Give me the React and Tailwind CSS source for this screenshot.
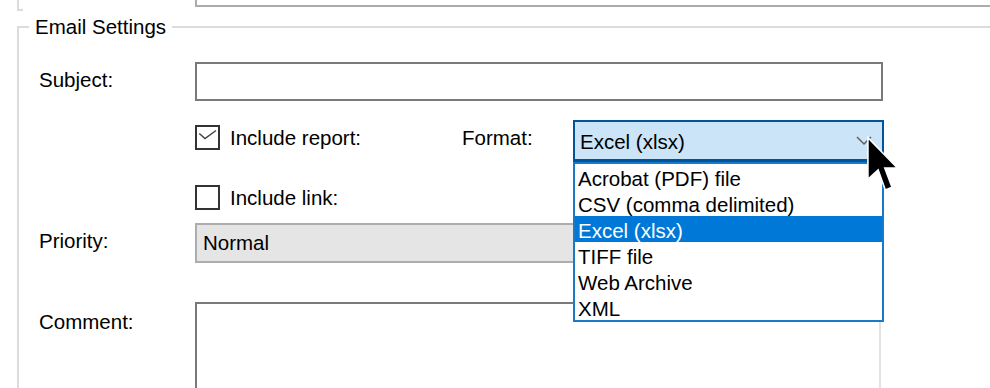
import React from 'react';

const formats = ['Acrobat (PDF) file', 'CSV (comma delimited)', 'Excel (xlsx)', 'TIFF file', 'Web Archive', 'XML'];

const Checkbox = ({ checked }) => (
  <span className="w-[25px] h-[25px] border-2 border-[#333333] bg-white shrink-0 flex">
    {checked && (
      <svg width="21" height="21" viewBox="0 0 21 21">
        <path d="M2.3 6.5 L8 11.5 L19 3.5" fill="none" stroke="#444444" strokeWidth="1.5" />
      </svg>
    )}
  </span>
);

const App = () => {
  return (
    <div className="w-[990px] h-[388px] overflow-hidden bg-white relative font-['Liberation_Sans',Arial,sans-serif] text-[20.5px] leading-[24px] text-black">
      {/* bottom of the group above */}
      <div className="flex h-[26px] items-start">
        <div className="ml-[17px] w-[6px] h-[11px] border-l-2 border-b-2 border-[#dcdcdc]" />
        <div className="ml-[172px] flex-1 h-[7px] border-l-2 border-b-2 border-[#acacac]" />
      </div>

      {/* Email Settings group */}
      <div className="ml-[17px] border-t-2 border-l-2 border-[#dcdcdc] h-[400px] pl-[20px]">
        <span className="block w-fit -mt-[13px] -ml-[10px] px-[6px] bg-white">Email Settings</span>

        {/* Subject */}
        <div className="flex items-center mt-[23px] h-[39px]">
          <span className="w-[156px] mb-[4px]">Subject:</span>
          <div className="w-[688px] h-[39px] border-2 border-[#7a7a7a] bg-white" />
        </div>

        {/* Include report + format */}
        <div className="flex items-start mt-[19px] h-[42px]">
          <span className="w-[156px]" />
          <div className="w-[267px] h-[25px] mt-[5px] flex items-center gap-[10px]">
            <Checkbox checked />
            <span>Include report:</span>
          </div>
          <div className="w-[111px] h-[25px] mt-[5px] flex items-center">Format:</div>
          <div className="w-[311px] h-[42px] border-2 border-b-[3px] border-[#005499] bg-[#cce4f7] flex items-center justify-between pl-[5px] pt-[3px]">
            <span>Excel (xlsx)</span>
            <svg width="18" height="10" viewBox="0 0 18 10" className="mr-[8px] -mt-[3px]">
              <path d="M1 1 L8 8 L15 1" fill="none" stroke="#606060" strokeWidth="1.5" />
            </svg>
          </div>
        </div>

        {/* Include link */}
        <div className="flex items-center mt-[23px] h-[25px]">
          <span className="w-[156px]" />
          <Checkbox />
          <span className="ml-[10px]">Include link:</span>
        </div>

        {/* Priority */}
        <div className="flex items-center mt-[13px] h-[40px]">
          <span className="w-[156px] mb-[4px]">Priority:</span>
          <div className="w-[688px] h-[40px] bg-[#e5e5e5] border-2 border-[#adadad] flex items-center pl-[6px]">
            Normal
          </div>
        </div>

        {/* Comment */}
        <div className="flex items-start mt-[39px]">
          <span className="w-[156px] mt-[8px]">Comment:</span>
          <div className="w-[686px] h-[120px] border-2 border-t-[#7a7a7a] border-l-[#7a7a7a] border-r-[#e3e3e3] border-b-[#e3e3e3] bg-white" />
        </div>
      </div>

      {/* open format list */}
      <div className="absolute left-[573px] top-[162px] w-[311px] border-2 border-[#1979ca] bg-white">
        {formats.map((f) => (
          <div
            key={f}
            className={
              f === 'Excel (xlsx)'
                ? 'h-[26px] flex items-center pt-[3px] pl-[3px] bg-[#0078d7] text-white'
                : 'h-[26px] flex items-center pt-[3px] pl-[3px]'
            }
          >
            {f}
          </div>
        ))}
      </div>

      {/* mouse pointer */}
      <svg className="absolute left-[865px] top-[135px]" width="38" height="59" viewBox="0 0 14 22">
        <polygon
          points="1,1 1,16.5 4.8,13 7.5,20.5 10,19.5 7.3,12.3 12,12.3"
          fill="#000000"
          stroke="#ffffff"
          strokeWidth="0.6"
          strokeLinejoin="miter"
        />
      </svg>
    </div>
  );
};

export default App;
